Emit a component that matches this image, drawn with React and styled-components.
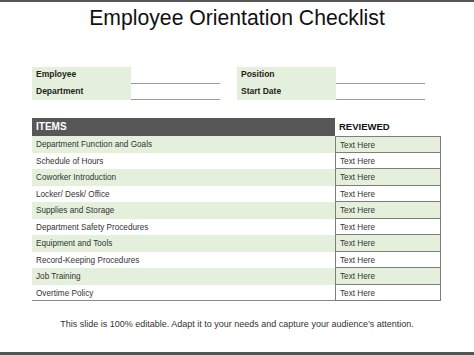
import React from "react";
import styled, { createGlobalStyle } from "styled-components";

const GlobalStyle = createGlobalStyle`
  html, body {
    margin: 0;
    padding: 0;
    background: #fff;
  }
  body {
    font-family: "Liberation Sans", Arial, sans-serif;
    color: #222;
  }
`;

const ITEMS = [
  "Department Function and Goals",
  "Schedule of Hours",
  "Coworker Introduction",
  "Locker/ Desk/ Office",
  "Supplies and Storage",
  "Department Safety Procedures",
  "Equipment and Tools",
  "Record-Keeping Procedures",
  "Job Training",
  "Overtime Policy",
];

export default function App() {
  return (
    <Slide>
      <GlobalStyle />
      <TopBar />
      <Title>Employee Orientation Checklist</Title>

      <InfoSection>
        <InfoGroup>
          <InfoRow>
            <InfoLabel>Employee</InfoLabel>
            <InfoLine />
          </InfoRow>
          <InfoRow>
            <InfoLabel>Department</InfoLabel>
            <InfoLine />
          </InfoRow>
        </InfoGroup>
        <InfoGroup>
          <InfoRow>
            <InfoLabel>Position</InfoLabel>
            <InfoLine />
          </InfoRow>
          <InfoRow>
            <InfoLabel>Start Date</InfoLabel>
            <InfoLine />
          </InfoRow>
        </InfoGroup>
      </InfoSection>

      <Table>
        <ItemsHead>ITEMS</ItemsHead>
        <ReviewedHead>REVIEWED</ReviewedHead>
        {ITEMS.map((item, i) => (
          <React.Fragment key={item}>
            <ItemCell shaded={i % 2 === 0} last={i === ITEMS.length - 1}>
              {item}
            </ItemCell>
            <ReviewCell shaded={i % 2 === 0} first={i === 0}>
              Text Here
            </ReviewCell>
          </React.Fragment>
        ))}
      </Table>

      <Footer>
        This slide is 100% editable. Adapt it to your needs and capture your
        audience’s attention.
      </Footer>
      <BottomBar />
    </Slide>
  );
}

const Slide = styled.div`
  width: 474px;
  height: 355px;
  display: flex;
  flex-direction: column;
  overflow: hidden;
`;

const TopBar = styled.div`
  height: 2px;
  background: #555;
`;

const Title = styled.h1`
  margin: 3px 0 0;
  font-size: 21.2px;
  line-height: 26px;
  font-weight: 400;
  text-align: center;
  color: #111;
`;

const InfoSection = styled.div`
  display: flex;
  gap: 17px;
  margin: 36px 0 0 32px;
`;

const InfoGroup = styled.div`
  display: flex;
  flex-direction: column;
`;

const InfoRow = styled.div`
  display: flex;
  height: 16.5px;
`;

const InfoLabel = styled.div`
  width: 95px;
  padding-left: 4px;
  background: #e5f0dc;
  font-size: 8.5px;
  font-weight: 700;
  line-height: 15px;
  color: #222;
`;

const InfoLine = styled.div`
  width: 89px;
  border-bottom: 1px solid #9a9a9a;
`;

const Table = styled.div`
  display: grid;
  grid-template-columns: 303px 106px;
  grid-template-rows: 18px;
  grid-auto-rows: 16.5px;
  margin: 18px 0 0 32px;
  font-size: 8.2px;
`;

const ItemsHead = styled.div`
  background: #575757;
  color: #fff;
  font-weight: 700;
  font-size: 10px;
  line-height: 18px;
  padding-left: 4px;
`;

const ReviewedHead = styled.div`
  color: #111;
  font-weight: 700;
  font-size: 9.5px;
  line-height: 18px;
  padding-left: 4px;
`;

const ItemCell = styled.div`
  background: ${(p) => (p.shaded ? "#e5f0dc" : "#fff")};
  padding-left: 4px;
  line-height: 18px;
  color: #333;
  border-bottom: ${(p) => (p.last ? "1px solid #8a8a8a" : "none")};
`;

const ReviewCell = styled.div`
  background: ${(p) => (p.shaded ? "#e5f0dc" : "#fff")};
  padding-left: 4px;
  line-height: 17px;
  color: #333;
  border: 1px solid #7d7d7d;
  border-top: ${(p) => (p.first ? "1px solid #7d7d7d" : "none")};
`;

const Footer = styled.p`
  margin: 18px 0 0;
  text-align: center;
  font-size: 9px;
  color: #333;
`;

const BottomBar = styled.div`
  margin-top: auto;
  height: 3px;
  background: #555;
`;
